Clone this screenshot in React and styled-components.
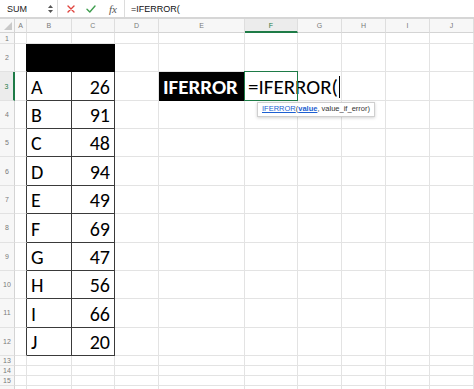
import React from 'react';
import styled, { createGlobalStyle } from 'styled-components';

const Global = createGlobalStyle`
  html, body { margin: 0; padding: 0; background: #fff; }
  body { width: 474px; height: 389px; overflow: hidden; font-family: "Liberation Sans", Arial, sans-serif; }
`;

const Window = styled.div`
  display: flex;
  flex-direction: column;
  width: 474px;
  height: 389px;
  overflow: hidden;
  background: #fff;
`;

const FormulaBar = styled.div`
  display: flex;
  align-items: center;
  height: 17px;
  border-bottom: 2px solid #d6d6d6;
  background: #fff;
  font-size: 9px;
  color: #222;
`;

const NameBox = styled.div`
  display: flex;
  align-items: center;
  justify-content: space-between;
  width: 58px;
  height: 100%;
  box-sizing: border-box;
  padding: 0 4px 0 7px;
  border-right: 1px solid #dcdcdc;
`;

const Stepper = styled.div`
  display: flex;
  flex-direction: column;
  align-items: center;
  gap: 2px;
`;

const Tools = styled.div`
  display: flex;
  align-items: center;
  gap: 11px;
  height: 100%;
  padding: 0 7px 0 9px;
  border-right: 1px solid #dcdcdc;
`;

const Fx = styled.span`
  font-family: "Liberation Serif", "Times New Roman", serif;
  font-style: italic;
  font-size: 11px;
  color: #555;
  margin-left: 2px;
`;

const FormulaText = styled.div`
  padding-left: 6px;
  font-size: 9px;
  color: #111;
`;

const Sheet = styled.div`
  display: grid;
  grid-template-columns: 15px 12px 44.5px 43.5px 44px 86px 53px 44px 44px 44px 1fr;
  grid-template-rows: 14px 11px repeat(11, 28.36px) 10px 10px 10px 10px;
  flex: 1;
  overflow: hidden;
`;

const Corner = styled.div`
  box-sizing: border-box;
  background: #f7f7f7;
  border-right: 1px solid #d4d4d4;
  border-bottom: 1px solid #d4d4d4;
  display: flex;
  align-items: flex-end;
  justify-content: flex-end;
  padding: 0 2px 2px 0;
`;

const ColHead = styled.div`
  box-sizing: border-box;
  display: flex;
  align-items: center;
  justify-content: center;
  background: ${p => (p.$active ? '#ececec' : '#f7f7f7')};
  border-right: 1px solid #dedede;
  border-bottom: ${p => (p.$active ? '2px solid #1e7b47' : '1px solid #d4d4d4')};
  font-size: 7px;
  color: ${p => (p.$active ? '#1e7b47' : '#7a7a7a')};
`;

const RowHead = styled.div`
  box-sizing: border-box;
  display: flex;
  align-items: center;
  justify-content: center;
  background: ${p => (p.$active ? '#ececec' : '#f7f7f7')};
  border-right: ${p => (p.$active ? '2px solid #1e7b47' : '1px solid #d4d4d4')};
  border-bottom: 1px solid #e2e2e2;
  font-size: 7px;
  line-height: 1;
  color: ${p => (p.$active ? '#1e7b47' : '#7a7a7a')};
`;

const Cell = styled.div`
  position: relative;
  box-sizing: border-box;
  display: flex;
  align-items: flex-end;
  justify-content: ${p => (p.$right ? 'flex-end' : 'flex-start')};
  padding: 0 4px 1px 4px;
  background: ${p => (p.$fill ? '#000' : '#fff')};
  border-right: 1px solid ${p => p.$edgeR || '#e3e3e3'};
  border-bottom: 1px solid ${p => p.$edgeB || '#e3e3e3'};
  font-family: Carlito, Lato, "Liberation Sans", sans-serif;
  font-size: ${p => (p.$bold ? '21px' : '20px')};
  line-height: 24px;
  color: ${p => (p.$fill ? '#fff' : '#000')};
  font-weight: ${p => (p.$bold ? 700 : 400)};
  white-space: nowrap;
`;

const ActiveCell = styled(Cell)`
  z-index: 2;
  overflow: visible;
  padding-left: 3px;
  font-size: 21px;
  &::after {
    content: '';
    position: absolute;
    inset: -1px -1px -1px -1px;
    border: 1.5px solid #1e7b47;
    pointer-events: none;
  }
`;

const Caret = styled.span`
  display: inline-block;
  width: 1px;
  height: 22px;
  background: #000;
  margin-left: 1px;
  vertical-align: -4px;
`;

const Tip = styled.div`
  position: absolute;
  left: 12px;
  top: calc(100% + 2px);
  z-index: 3;
  padding: 1px 4px 2px;
  background: #fff;
  border: 1px solid #cfcfcf;
  box-shadow: 0 1px 3px rgba(0, 0, 0, 0.18);
  font-family: "Liberation Sans", Arial, sans-serif;
  font-size: 7.5px;
  line-height: 10px;
  color: #333;
  font-weight: 400;
`;

const TipLink = styled.span`
  color: #1c5fd1;
  text-decoration: underline;
  font-weight: ${p => (p.$bold ? 700 : 400)};
`;

const cols = ['A', 'B', 'C', 'D', 'E', 'F', 'G', 'H', 'I', 'J'];
const data = [
  ['A', 26], ['B', 91], ['C', 48], ['D', 94], ['E', 49],
  ['F', 69], ['G', 47], ['H', 56], ['I', 66], ['J', 20],
];
const DARK = '#3a3a3a';

function renderCell(r, c) {
  const key = `${r}-${c}`;
  const inTable = r >= 3 && r <= 12;
  const col = cols[c];
  if (r === 2 && (col === 'B' || col === 'C')) {
    return <Cell key={key} $fill $edgeR="#000" $edgeB="#000" />;
  }
  if (r === 2 && col === 'A') return <Cell key={key} $edgeR="#000" />;
  if (inTable && col === 'A') return <Cell key={key} $edgeR={DARK} />;
  if (inTable && col === 'B') {
    return (
      <Cell key={key} $edgeR={DARK} $edgeB={DARK}>
        {data[r - 3][0]}
      </Cell>
    );
  }
  if (inTable && col === 'C') {
    return (
      <Cell key={key} $right $edgeR={DARK} $edgeB={DARK}>
        {data[r - 3][1]}
      </Cell>
    );
  }
  if (r === 3 && col === 'E') {
    return (
      <Cell key={key} $fill $bold $edgeR="#000" $edgeB="#000">
        IFERROR
      </Cell>
    );
  }
  if (r === 3 && col === 'F') {
    return (
      <ActiveCell key={key}>
        <span>
          =IFERROR(
          <Caret />
        </span>
        <Tip>
          <TipLink>IFERROR</TipLink>(<TipLink $bold>value</TipLink>, value_if_error)
        </Tip>
      </ActiveCell>
    );
  }
  return <Cell key={key} />;
}

export default function App() {
  const rows = Array.from({ length: 16 }, (_, i) => i + 1);
  return (
    <Window>
      <Global />
      <FormulaBar>
        <NameBox>
          <span>SUM</span>
          <Stepper>
            <svg width="5" height="3" viewBox="0 0 5 3"><path d="M0 3 L2.5 0 L5 3Z" fill="#555" /></svg>
            <svg width="5" height="3" viewBox="0 0 5 3"><path d="M0 0 L2.5 3 L5 0Z" fill="#555" /></svg>
          </Stepper>
        </NameBox>
        <Tools>
          <svg width="8" height="8" viewBox="0 0 8 8">
            <path d="M1 1 L7 7 M7 1 L1 7" stroke="#e0443e" strokeWidth="1.4" strokeLinecap="round" />
          </svg>
          <svg width="10" height="8" viewBox="0 0 10 8">
            <path d="M1 4.3 L3.8 7 L9 1" stroke="#3f9e4f" strokeWidth="1.4" fill="none" strokeLinecap="round" strokeLinejoin="round" />
          </svg>
          <Fx>fx</Fx>
        </Tools>
        <FormulaText>=IFERROR(</FormulaText>
      </FormulaBar>
      <Sheet>
        <Corner>
          <svg width="8" height="8" viewBox="0 0 8 8"><path d="M8 0 L8 8 L0 8Z" fill="#c9c9c9" /></svg>
        </Corner>
        {cols.map(c => (
          <ColHead key={c} $active={c === 'F'}>{c}</ColHead>
        ))}
        {rows.map(r => (
          <React.Fragment key={r}>
            <RowHead $active={r === 3}>{r <= 15 ? r : ''}</RowHead>
            {cols.map((_, c) => renderCell(r, c))}
          </React.Fragment>
        ))}
      </Sheet>
    </Window>
  );
}
